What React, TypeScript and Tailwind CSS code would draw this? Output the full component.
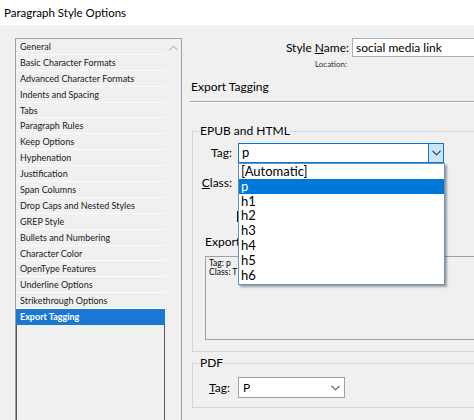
import React from "react";

const items = [
  "General",
  "Basic Character Formats",
  "Advanced Character Formats",
  "Indents and Spacing",
  "Tabs",
  "Paragraph Rules",
  "Keep Options",
  "Hyphenation",
  "Justification",
  "Span Columns",
  "Drop Caps and Nested Styles",
  "GREP Style",
  "Bullets and Numbering",
  "Character Color",
  "OpenType Features",
  "Underline Options",
  "Strikethrough Options",
  "Export Tagging",
];

const options = ["[Automatic]", "p", "h1", "h2", "h3", "h4", "h5", "h6"];

function Chevron({ className }: { className?: string }) {
  return (
    <svg width="9" height="6" viewBox="0 0 9 6" className={className}>
      <path d="M0.5 0.8 L4.5 4.8 L8.5 0.8" fill="none" stroke="currentColor" strokeWidth="1.1" />
    </svg>
  );
}

export default function App() {
  return (
    <div className="w-[474px] h-[420px] overflow-hidden bg-[#f0f0f0] text-black font-['Lato','Noto_Sans',sans-serif]">
      <div className="h-[25px] bg-white flex items-center pl-[4px] text-[11.5px]">Paragraph Style Options</div>
      <div className="flex h-[395px]">
        {/* left list */}
        <div className="w-[182px] shrink-0 pl-[15px] pt-[13px]">
          <div className="w-[167px] h-full border-l border-t border-r border-[#a0a0a0] flex">
            <div className="w-[149px] h-full flex flex-col">
              {items.map((t, i) =>
                i === items.length - 1 ? (
                  <div key={t} className="h-[15.9px] leading-[15.9px] bg-[#1b78d2] text-white font-bold pl-[4px] text-[9px] whitespace-nowrap">
                    {t}
                  </div>
                ) : (
                  <div key={t} className="h-[15.9px] leading-[15px] border-b border-[#fbfbfb] pl-[4px] text-[9px] text-[#1a1a1a] whitespace-nowrap">
                    {t}
                  </div>
                )
              )}
              <div className="flex-1 border-l border-r border-[#555]" />
            </div>
            <div className="flex-1 flex justify-center pt-[6px]">
              <svg width="9" height="6" viewBox="0 0 9 6" className="text-[#b8b8b8] rotate-180">
                <path d="M0.5 0.8 L4.5 4.8 L8.5 0.8" fill="none" stroke="currentColor" strokeWidth="1.1" />
              </svg>
            </div>
          </div>
        </div>

        {/* right panel */}
        <div className="flex-1 relative overflow-hidden pt-[13px]">
          <div className="flex h-[19px] items-center">
            <div className="w-[170px] shrink-0 text-right pr-[3px] text-[12px] leading-[19px]">
              Style <span className="underline">N</span>ame:
            </div>
            <div className="w-[140px] h-[19px] shrink-0 border border-[#abadb3] bg-white pl-[3px] text-[12px] leading-[17px]">
              social media link
            </div>
          </div>
          <div className="w-[165px] mt-[1px] text-right text-[8px] leading-[12px] text-[#333]">Location:</div>
          <div className="mt-[9px] pl-[9px] text-[12px] leading-[16px]">Export Tagging</div>
          <div className="mt-[6px] ml-[8px] h-px bg-[#a0a0a0]" />
          <div className="ml-[8px] h-px bg-white" />

          <fieldset className="mt-[21px] ml-[10px] w-[300px] border border-[#d5d5d5] px-[7px] pb-[11px]">
            <legend className="px-0 text-[12px] leading-[14px]">EPUB and HTML</legend>
            <div className="mt-[5px] flex h-[20px] items-center">
              <div className="w-[38px] shrink-0 text-right pr-[6px] text-[12px]">Tag:</div>
              <div className="w-[206px] h-[20px] shrink-0 border border-[#0078d7] bg-white flex">
                <div className="flex-1 pl-[3px] text-[13px] leading-[17px]">p</div>
                <div className="w-[15px] h-full bg-[#cce4f7] border-l border-[#0078d7] flex items-center justify-center text-[#333]">
                  <Chevron />
                </div>
              </div>
            </div>
            <div className="mt-[12px] flex h-[16px] items-center">
              <div className="w-[38px] shrink-0 text-right pr-[6px] text-[12px]">
                <span className="underline">C</span>lass:
              </div>
            </div>
            <div className="mt-[20px] h-[11px] ml-[37px] w-[2px] bg-[#111]" />
            <div className="mt-[12px] h-[16px] ml-[5px] text-[12px] leading-[16px] whitespace-nowrap">Export</div>
            <div className="mt-[6px] ml-[5px] h-[84px] border border-[#a0a0a0] bg-[#f0f0f0] pl-[3px] pt-[2px] text-[8.5px] leading-[9px]">
              <div className="w-[29px] overflow-hidden whitespace-nowrap">Tag: p</div>
              <div className="w-[29px] overflow-hidden whitespace-nowrap">Class: T</div>
            </div>
          </fieldset>

          <fieldset className="mt-[4px] ml-[10px] w-[300px] border border-[#d5d5d5] px-[7px] pb-[9px]">
            <legend className="px-0 text-[12px] leading-[14px]">PDF</legend>
            <div className="mt-[7px] flex h-[21px] items-center">
              <div className="w-[38px] shrink-0 text-right pr-[8px] text-[12px]">
                <span className="underline">T</span>ag:
              </div>
              <div className="w-[107px] h-[21px] shrink-0 border border-[#a0a0a0] bg-white flex items-center">
                <div className="flex-1 pl-[4px] text-[12px] leading-[19px]">P</div>
                <div className="pr-[4px] text-[#555]">
                  <Chevron />
                </div>
              </div>
            </div>
          </fieldset>

          {/* dropdown overlay */}
          <div className="absolute left-[56px] top-[138px] w-[207px] h-[122px] bg-white border border-[#6b93c0] shadow-[2px_2px_2px_rgba(0,0,0,0.35)] flex flex-col">
            {options.map((o, i) => (
              <div
                key={o}
                className={
                  i === 1
                    ? "h-[14.8px] leading-[14.8px] pl-[2px] text-[13px] bg-[#0078d7] text-white"
                    : "h-[14.8px] leading-[14.8px] pl-[2px] text-[13px]"
                }
              >
                {o}
              </div>
            ))}
          </div>
        </div>
      </div>
    </div>
  );
}
